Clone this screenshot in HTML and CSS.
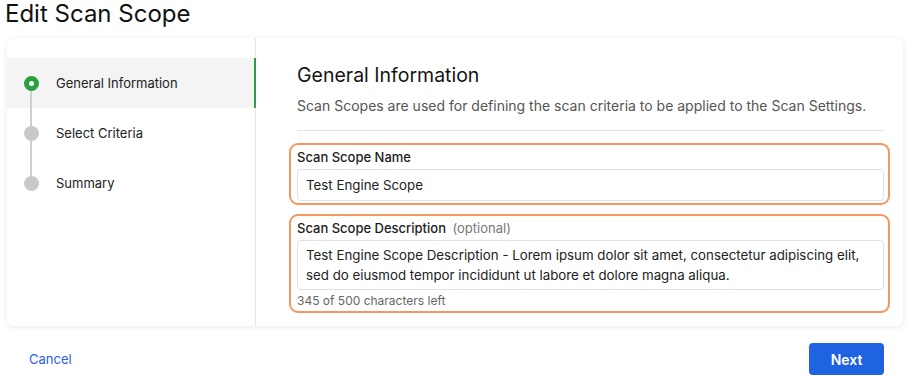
FILE: index.html
```html
<!DOCTYPE html>
<html lang="en">
<head>
    <meta charset="UTF-8">
    <title>Edit Scan Scope</title>
    <link rel="stylesheet" href="styles.css">
</head>
<body>
    <h1 class="page-title">Edit Scan Scope</h1>

    <div class="card">
        <div class="steps">
            <div class="step active">
                <span class="dot"></span>
                <span class="step-label">General Information</span>
            </div>
            <div class="step">
                <span class="dot"></span>
                <span class="step-label">Select Criteria</span>
            </div>
            <div class="step last">
                <span class="dot"></span>
                <span class="step-label">Summary</span>
            </div>
        </div>

        <div class="content">
            <h2>General Information</h2>
            <p class="intro">Scan Scopes are used for defining the scan criteria to be applied to the Scan Settings.</p>
            <hr class="divider">

            <div class="field field-name">
                <label for="scopeName">Scan Scope Name</label>
                <input type="text" id="scopeName" value="Test Engine Scope">
            </div>

            <div class="field field-desc">
                <label for="scopeDesc">Scan Scope Description <span class="optional">(optional)</span></label>
                <textarea id="scopeDesc">Test Engine Scope Description - Lorem ipsum dolor sit amet, consectetur adipiscing elit, sed do eiusmod tempor incididunt ut labore et dolore magna aliqua.</textarea>
                <div class="counter">345 of 500 characters left</div>
            </div>
        </div>
    </div>

    <div class="footer">
        <a href="#" class="cancel">Cancel</a>
        <button class="next">Next</button>
    </div>
</body>
</html>
```

FILE: styles.css
```css
body {
    margin: 0;
    font-family: Inter, 'Noto Sans', sans-serif;
    color: #1d1d1f;
    background-color: #fff;
}
.page-title {
    margin: 0;
    padding: 0 0 0 5px;
    height: 38px;
    line-height: 28px;
    font-size: 24px;
    font-weight: 400;
    color: #111;
}
.card {
    display: flex;
    margin: 0 8px 0 7px;
    height: 288px;
    background-color: #fff;
    border-radius: 6px;
    box-shadow: 0 1px 6px rgba(0, 0, 0, 0.09);
}
.steps {
    width: 248px;
    padding-top: 20px;
    border-right: 1px solid #e6e6e6;
}
.step {
    position: relative;
    display: flex;
    align-items: center;
    height: 50px;
    font-size: 13px;
    color: #222;
}
.step::after {
    content: '';
    position: absolute;
    left: 23px;
    top: 25px;
    width: 2px;
    height: 50px;
    background-color: #cfcfcf;
}
.step.last::after {
    display: none;
}
.step.active {
    background-color: #f4f4f4;
    margin-right: -1px;
    border-right: 2px solid #2aa043;
}
.dot {
    position: relative;
    z-index: 1;
    width: 15px;
    height: 15px;
    margin: 0 17px 0 17px;
    border-radius: 50%;
    background-color: #c9c9c9;
    box-sizing: border-box;
}
.step.active .dot {
    background-color: #fff;
    border: 5px solid #28a03f;
}
.content {
    flex: 1;
    padding: 25px 19px 0 41px;
}
.content h2 {
    margin: 0;
    font-size: 19.5px;
    font-weight: 400;
    line-height: 24px;
    color: #151515;
}
.intro {
    margin: 9px 0 0;
    font-size: 14px;
    line-height: 20px;
    color: #555;
}
.divider {
    margin: 14px 0 12px;
    border: none;
    border-top: 1px solid #dfe4ec;
}
.field {
    margin: 0 -6px 9px -8px;
    padding: 3px 4px 2px 6px;
    border: 2px solid #f5975f;
    border-radius: 9px;
}
.field label {
    display: block;
    font-size: 13px;
    font-weight: 500;
    line-height: 18px;
    color: #1c1c1c;
    margin-bottom: 3px;
}
.optional {
    margin-left: 3px;
    font-weight: 400;
    color: #777;
}
.field input,
.field textarea {
    display: block;
    width: 100%;
    box-sizing: border-box;
    border: 1px solid #dde2ea;
    border-radius: 4px;
    font-family: Inter, 'Noto Sans', sans-serif;
    font-size: 13.3px;
    color: #222;
    padding: 0 8px 0 8px;
}
.field input {
    height: 32px;
}
.field textarea {
    height: 50px;
    padding-top: 5px;
    line-height: 19.5px;
    resize: none;
    overflow: hidden;
}
.counter {
    margin-top: 3px;
    font-size: 12px;
    line-height: 16px;
    color: #666;
}
.footer {
    display: flex;
    justify-content: space-between;
    align-items: center;
    padding: 17px 27px 0 29px;
}
.cancel {
    font-size: 13px;
    color: #2a60e3;
    text-decoration: none;
}
.next {
    width: 75px;
    height: 32px;
    border: none;
    border-radius: 4px;
    background-color: #1f63e2;
    color: #fff;
    font-family: Inter, 'Noto Sans', sans-serif;
    font-size: 14px;
    font-weight: 600;
}
```
